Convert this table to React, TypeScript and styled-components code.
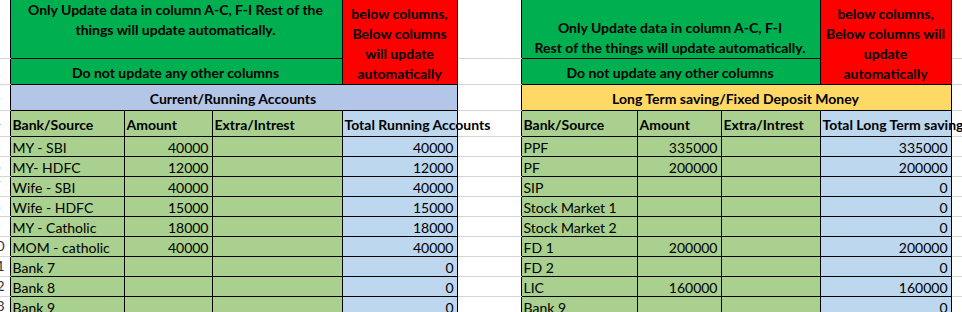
import React from "react";
import styled, { createGlobalStyle, css } from "styled-components";

const Global = createGlobalStyle`
  html, body { margin: 0; padding: 0; background: #fff; overflow: hidden; }
  body { font-family: Lato, "Liberation Sans", sans-serif; }
`;

type Tone = "head" | "warn" | "blue" | "gold" | "data" | "total";

const toneBg: Record<Tone, string> = {
  head: "#00B050",
  warn: "#FF0000",
  blue: "#B4C6E7",
  gold: "#FFD966",
  data: "#A9D08E",
  total: "#BDD7EE",
};

const Viewport = styled.div`
  width: 962px;
  height: 312px;
  overflow: hidden;
`;

const Sheet = styled.table`
  border-collapse: collapse;
  table-layout: fixed;
  width: 1000px;
  font-family: Lato, "Liberation Sans", sans-serif;
  font-size: 14px;
  color: #000;
`;

const Row = styled.tr<{ $h: number }>`
  height: ${(p) => p.$h}px;
`;

const RowHead = styled.td`
  padding: 0;
  border-bottom: 1px solid #d4d4d4;
  vertical-align: middle;
  overflow: hidden;
`;

const RowNum = styled.div`
  display: flex;
  justify-content: flex-end;
  overflow: hidden;
  font-size: 14px;
  line-height: 16px;
  color: #333;
  span {
    flex: none;
    width: 26px;
    text-align: center;
  }
`;

const Cell = styled.td<{
  $tone: Tone;
  $align?: "left" | "center" | "right";
  $bold?: boolean;
  $pad?: number;
  $open?: boolean;
  $valign?: "top" | "bottom";
  $lh?: number;
}>`
  background: ${(p) => toneBg[p.$tone]};
  border: 1px solid #000;
  ${(p) =>
    p.$open &&
    css`
      border-top: none;
    `}
  padding: 0 3px ${(p) => p.$pad ?? 0}px 2px;
  text-align: ${(p) => p.$align ?? "left"};
  font-weight: ${(p) => (p.$bold ? 700 : 400)};
  white-space: nowrap;
  vertical-align: ${(p) => p.$valign ?? "bottom"};
  line-height: ${(p) => p.$lh ?? 16}px;
`;

const Blank = styled.td`
  padding: 0;
  border-bottom: 1px solid #d4d4d4;
`;

const Clip = styled.div<{ $h: number }>`
  height: ${(p) => p.$h}px;
  display: flex;
  flex-direction: column;
  justify-content: flex-end;
  overflow: hidden;
  line-height: 20px;
  text-align: center;
`;

const Line = styled.span`
  display: block;
  white-space: nowrap;
`;

const cols = [10, 114, 88, 130, 115, 64, 116, 84, 99, 131, 49];

const running: [string, string, string][] = [
  ["MY - SBI", "40000", "40000"],
  ["MY- HDFC", "12000", "12000"],
  ["Wife - SBI", "40000", "40000"],
  ["Wife - HDFC", "15000", "15000"],
  ["MY - Catholic", "18000", "18000"],
  ["MOM - catholic", "40000", "40000"],
  ["Bank 7", "", "0"],
  ["Bank 8", "", "0"],
  ["Bank 9", "", "0"],
];

const longTerm: [string, string, string][] = [
  ["PPF", "335000", "335000"],
  ["PF", "200000", "200000"],
  ["SIP", "", "0"],
  ["Stock Market 1", "", "0"],
  ["Stock Market 2", "", "0"],
  ["FD 1", "200000", "200000"],
  ["FD 2", "", "0"],
  ["LIC", "160000", "160000"],
  ["Bank 9", "", "0"],
];

const Num = ({ n }: { n: number }) => (
  <RowHead>
    <RowNum>
      <span>{n}</span>
    </RowNum>
  </RowHead>
);

export default function App() {
  return (
    <>
      <Global />
      <Viewport>
        <Sheet>
          <colgroup>
            {cols.map((w, i) => (
              <col key={i} style={{ width: w }} />
            ))}
          </colgroup>
          <tbody>
            <Row $h={58}>
              <Num n={1} />
              <Cell colSpan={3} $tone="head" $bold $align="center" $valign="top" $lh={20} $open>
                <Line>Only Update data in column A-C, F-I Rest of the</Line>
                <Line>things will update automatically.</Line>
              </Cell>
              <Cell rowSpan={2} $tone="warn" $bold $open style={{ padding: 0 }}>
                <Clip $h={83}>
                  <Line>Only update</Line>
                  <Line>below columns,</Line>
                  <Line>Below columns</Line>
                  <Line>will update</Line>
                  <Line>automatically</Line>
                </Clip>
              </Cell>
              <Blank />
              <Cell colSpan={3} $tone="head" $bold $align="center" $lh={20} $open>
                <Line>Only Update data in column A-C, F-I</Line>
                <Line>Rest of the things will update automatically.</Line>
              </Cell>
              <Cell rowSpan={2} $tone="warn" $bold $open style={{ padding: 0 }}>
                <Clip $h={83}>
                  <Line>Only update</Line>
                  <Line>below columns,</Line>
                  <Line>Below columns will</Line>
                  <Line>update</Line>
                  <Line>automatically</Line>
                </Clip>
              </Cell>
              <Blank />
            </Row>
            <Row $h={26}>
              <Num n={2} />
              <Cell colSpan={3} $tone="head" $bold $align="center" $pad={3}>
                Do not update any other columns
              </Cell>
              <Blank />
              <Cell colSpan={3} $tone="head" $bold $align="center" $pad={3}>
                Do not update any other columns
              </Cell>
              <Blank />
            </Row>
            <Row $h={26}>
              <Num n={3} />
              <Cell colSpan={4} $tone="blue" $bold $align="center" $pad={3}>
                Current/Running Accounts
              </Cell>
              <Blank />
              <Cell colSpan={4} $tone="gold" $bold $align="center" $pad={3}>
                Long Term saving/Fixed Deposit Money
              </Cell>
              <Blank />
            </Row>
            <Row $h={26}>
              <Num n={4} />
              <Cell $tone="data" $bold $pad={3}>Bank/Source</Cell>
              <Cell $tone="data" $bold $pad={3}>Amount</Cell>
              <Cell $tone="data" $bold $pad={3}>Extra/Intrest</Cell>
              <Cell $tone="total" $bold $pad={3}>Total Running Accounts</Cell>
              <Blank />
              <Cell $tone="data" $bold $pad={3}>Bank/Source</Cell>
              <Cell $tone="data" $bold $pad={3}>Amount</Cell>
              <Cell $tone="data" $bold $pad={3}>Extra/Intrest</Cell>
              <Cell $tone="total" $bold $pad={3}>Total Long Term saving</Cell>
              <Blank />
            </Row>
            {running.map((r, i) => {
              const l = longTerm[i];
              return (
                <Row $h={20} key={i}>
                  <Num n={i + 5} />
                  <Cell $tone="data">{r[0]}</Cell>
                  <Cell $tone="data" $align="right">{r[1]}</Cell>
                  <Cell $tone="data" />
                  <Cell $tone="total" $align="right">{r[2]}</Cell>
                  <Blank />
                  <Cell $tone="data">{l[0]}</Cell>
                  <Cell $tone="data" $align="right">{l[1]}</Cell>
                  <Cell $tone="data" />
                  <Cell $tone="total" $align="right">{l[2]}</Cell>
                  <Blank />
                </Row>
              );
            })}
          </tbody>
        </Sheet>
      </Viewport>
    </>
  );
}
